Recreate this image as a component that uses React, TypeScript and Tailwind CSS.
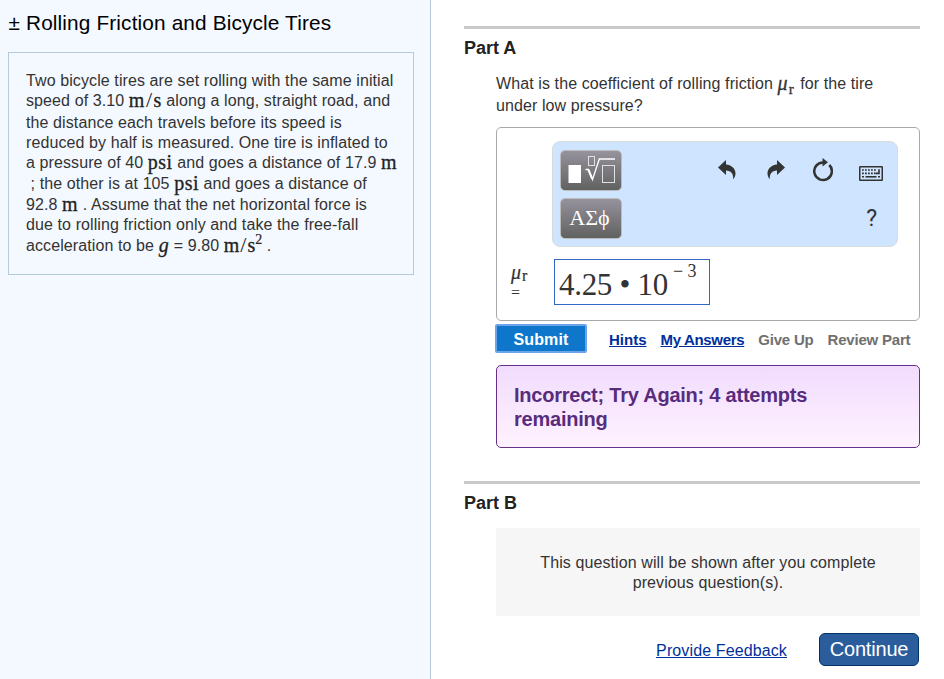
import type { ReactNode } from "react";

function Unit({ children, className = "" }: { children: ReactNode; className?: string }) {
  return (
    <span className={`relative top-px whitespace-nowrap font-['Liberation_Serif',serif] text-[20px] leading-[0] tracking-[.5px] text-[#222] [-webkit-text-stroke:.3px_#222] ${className}`}>
      {children}
    </span>
  );
}

function Slash() {
  return <span className="mx-[1px] text-[22px] leading-[0] [-webkit-text-stroke:0]">/</span>;
}

function PartHeading({ title }: { title: string }) {
  return (
    <h2 className="border-t-3 border-[#c9c9c9] pt-[7px] text-[18px] leading-6 font-bold text-[#222]">{title}</h2>
  );
}

function ProblemPanel() {
  return (
    <aside className="h-full w-[431px] shrink-0 border-r border-[#b5cadb] bg-[#f3f9ff] pt-[9px] pl-2">
      <h1 className="pl-[.5px] text-[20.8px] leading-7 tracking-[.14px] text-black">± Rolling Friction and Bicycle Tires</h1>
      <div className="mt-[15px] h-[223px] w-[406px] border border-[#b5cadb] pt-[18px] pl-[17px] text-[16px] leading-5 tracking-[.1px] whitespace-nowrap text-[#333]">
        <div className="h-5">Two bicycle tires are set rolling with the same initial</div>
        <div className="h-[22px]">speed of 3.10 <Unit>m<Slash />s</Unit> along a long, straight road, and</div>
        <div className="h-5">the distance each travels before its speed is</div>
        <div className="h-5">reduced by half is measured. One tire is inflated to</div>
        <div className="h-[21px]">a pressure of 40 <Unit>psi</Unit> and goes a distance of 17.9 <Unit>m</Unit></div>
        <div className="h-[21px]">&nbsp;; the other is at 105 <Unit>psi</Unit> and goes a distance of</div>
        <div className="h-5">92.8 <Unit>m</Unit> . Assume that the net horizontal force is</div>
        <div className="h-[21px]">due to rolling friction only and take the free-fall</div>
        <div className="h-5">acceleration to be <Unit className="italic">g</Unit> = 9.80 <Unit className="tracking-normal">m<Slash />s<sup className="top-[-8px] text-[14px] leading-[0] [-webkit-text-stroke:.2px_#222]">2</sup></Unit> .</div>
      </div>
    </aside>
  );
}

function TemplateIcon() {
  return (
    <svg width="48" height="31" viewBox="0 0 48 31" fill="none">
      <rect x="1.500" y="10" width="12.500" height="18" fill="#fff" />
      <rect x="21.500" y="1.500" width="6" height="9" stroke="#e0e0e0" />
      <path d="M18.500 14.500h3l4 10L32.300 4H48" stroke="#fff" strokeWidth="1.300" />
      <path d="M21.500 15l3.500 8.500" stroke="#fff" strokeWidth="2" />
      <rect x="35.500" y="10.500" width="12" height="17" stroke="#e0e0e0" />
    </svg>
  );
}

function UndoIcon({ className = "" }: { className?: string }) {
  return (
    <svg className={className} width="18" height="20" viewBox="0 0 18 20">
      <path d="M0 7.500L8 0v4.500c6 .5 9.500 4.500 9.500 9 0 2-.8 4-2.300 5.800.3-5.500-1.700-8.300-7.200-8.800V15z" fill="#333" />
    </svg>
  );
}

function ResetIcon() {
  return (
    <svg width="20" height="24" viewBox="0 0 20 24" fill="none">
      <path d="M16.300 7A8.800 8.800 0 1 1 10 4.400" stroke="#333" strokeWidth="2.500" />
      <path d="M9.500 0l5.500 4.300-5.500 4.200z" fill="#333" />
    </svg>
  );
}

function KeyboardIcon() {
  return (
    <svg width="24" height="15" viewBox="0 0 24 15" fill="none">
      <rect x=".75" y=".75" width="22.500" height="13.500" rx=".5" stroke="#333" strokeWidth="1.500" />
      <path d="M3 4h15" stroke="#333" strokeWidth="1.600" strokeDasharray="1.800 1.200" />
      <path d="M3 7.400h14" stroke="#333" strokeWidth="1.600" strokeDasharray="1.800 1.200" />
      <path d="M17 7.400h3V3.200M3 10.800h2M19 10.800h2" stroke="#333" strokeWidth="1.600" />
      <path d="M6.500 10.800h11" stroke="#333" strokeWidth="1.600" />
    </svg>
  );
}

function Toolbar() {
  return (
    <div className="ml-[55px] flex h-[106px] w-[346px] rounded-lg border border-[#d9dcdf] bg-[#cee4ff] pt-2 pl-[7px]">
      <div className="flex w-[62px] flex-col gap-[7px]">
        <button className="flex h-[41px] items-center justify-center rounded-[5px] border border-[#bbb] bg-linear-to-b from-[#96939d] to-[#616161]">
          <TemplateIcon />
        </button>
        <button className="h-[41px] rounded-[5px] border border-[#bbb] bg-linear-to-b from-[#96939d] to-[#616161] pr-[3px] pb-[2px] font-['Liberation_Serif',serif] text-[22px] leading-none text-white">
          ΑΣϕ
        </button>
      </div>
      <div className="ml-[96px] pt-[10px]">
        <div className="flex">
          <UndoIcon />
          <UndoIcon className="ml-[31px] -scale-x-100" />
          <span className="-mt-[2px] ml-[28px]"><ResetIcon /></span>
          <span className="mt-[6px] ml-[26px]"><KeyboardIcon /></span>
        </div>
        <div className="mt-[23px] w-[165px] pr-[6px] text-right font-[Roboto,sans-serif] text-[23px] leading-7 text-[#333]">?</div>
      </div>
    </div>
  );
}

function AnswerBox() {
  return (
    <div className="mt-[10px] h-[194px] w-[424px] rounded-[5px] border border-[#a9a9a9] pt-[13px]">
      <Toolbar />
      <div className="mt-3 flex">
        <div className="ml-[14px] w-[43px] font-['Liberation_Serif',serif] text-[#333]">
          <div className="h-6 pt-px text-[20px] leading-6 whitespace-nowrap [-webkit-text-stroke:.2px_#333]"><i>μ</i><sub className="bottom-[-2px] ml-px text-[16px] leading-none">r</sub></div>
          <div className="text-[16px] leading-5">=</div>
        </div>
        <div className="h-[46px] w-[156px] border border-[#3167c6] bg-white pl-1 font-['Liberation_Serif',serif] text-[31px] leading-[50px] tracking-[-.3px] whitespace-nowrap text-[#333]">
          4.25 • 10<sup className="top-[-18px] ml-[5px] text-[18px] leading-[0] tracking-normal">− 3</sup>
        </div>
      </div>
    </div>
  );
}

function PartA() {
  return (
    <section className="h-[455px]">
      <PartHeading title="Part A" />
      <div className="ml-8">
        <p className="mt-[13px] text-[16px] leading-[22px] tracking-[.1px] whitespace-nowrap text-[#333]">
          What is the coefficient of rolling friction{" "}
          <span className="relative top-px inline-block h-0 w-[18px] font-['Liberation_Serif',serif] text-[20px] leading-[0] [-webkit-text-stroke:.3px_#333]"><i>μ</i><sub className="ml-px text-[15px] leading-[0]">r</sub></span>{" "}
          for the tire
          <br />
          under low pressure?
        </p>
        <AnswerBox />
        <div className="mt-[2px] flex h-[30px] items-center text-[15px] font-bold whitespace-nowrap">
          <button className="-ml-px h-[29px] w-[92px] rounded-[2px] border-2 border-[#6ba4e8] bg-[#0f77cb] pt-[2px] text-[16px] leading-[23px] font-bold tracking-[.15px] text-white">Submit</button>
          <a className="mt-[5px] ml-[22px] text-[#002f9c] underline">Hints</a>
          <a className="mt-[5px] ml-[14px] tracking-[-.32px] text-[#002f9c] underline">My Answers</a>
          <span className="mt-[5px] ml-[14px] tracking-[-.2px] text-[#707070]">Give Up</span>
          <span className="mt-[5px] ml-[14px] tracking-[-.2px] text-[#707070]">Review Part</span>
        </div>
        <div className="mt-3 h-[83px] w-[424px] rounded-[5px] border border-[#65308a] bg-linear-to-b from-[#f1dcfd] to-[#fff2ff] pt-[17px] pl-[17px] text-[20px] leading-6 font-bold tracking-[-.23px] text-[#582c7c]">
          Incorrect; Try Again; 4 attempts
          <br />
          remaining
        </div>
      </div>
    </section>
  );
}

function PartB() {
  return (
    <section>
      <PartHeading title="Part B" />
      <div className="mt-[13px] ml-8 h-[88px] bg-[#f6f6f6] pt-[25px] text-center text-[16px] leading-5 tracking-[.1px] text-[#333]">
        This question will be shown after you complete
        <br />
        previous question(s).
      </div>
      <div className="mt-[17px] mr-px flex items-center justify-end">
        <a className="mt-[2px] mr-8 text-[16px] leading-5 tracking-[.12px] text-[#002f9c] underline">Provide Feedback</a>
        <button className="h-[33px] w-[100px] rounded-[6px] border border-[#003268] bg-[#2b5d9c] pb-[2px] text-[20px] leading-none tracking-[-.2px] text-white">Continue</button>
      </div>
    </section>
  );
}

export default function App() {
  return (
    <div className="flex h-[679px] w-[944px] overflow-hidden bg-white font-['Liberation_Sans',Arial,sans-serif]">
      <ProblemPanel />
      <main className="ml-[33px] w-[456px] pt-[26px]">
        <PartA />
        <PartB />
      </main>
    </div>
  );
}
